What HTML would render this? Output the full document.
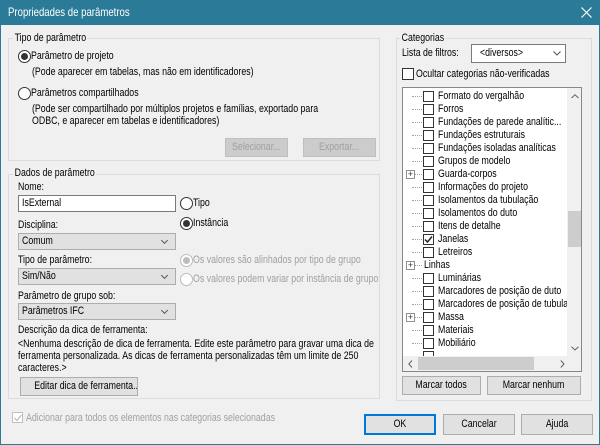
<!DOCTYPE html>
<html><head><meta charset="utf-8"><style>
*{box-sizing:border-box;margin:0;padding:0}
body{width:600px;height:445px;overflow:hidden;background:#f0f0f0;font-family:"Liberation Sans",sans-serif;font-size:11px;color:#000;position:relative}
.a{position:absolute;white-space:nowrap;line-height:13px;transform:scaleX(.8);transform-origin:0 0}
.s{display:inline-block;white-space:nowrap;transform:scaleX(.8);transform-origin:50% 50%}
.ls{display:inline-block;white-space:nowrap;transform:scaleX(.8);transform-origin:0 50%}
#win{position:absolute;left:0;top:0;width:600px;height:445px;border:1px solid #2b7a98}
#title{position:absolute;left:0;top:0;width:600px;height:25px;background:#2b7a98;color:#fff;font-size:12px;line-height:25px;padding-left:8px}
.grp{position:absolute;border:1px solid #dcdcdc}
.lbl{background:#f0f0f0;padding:0 2px}
.btn{position:absolute;background:#e1e1e1;border:1px solid #adadad;text-align:center;line-height:17px;white-space:nowrap;overflow:hidden}
.dis{color:#a0a0a0;background:#cccccc;border-color:#bfbfbf}
.sel{position:absolute;background:#e1e1e1;border:1px solid #adadad;height:17px;line-height:15px;padding-left:3px}
.sel:after{content:"";position:absolute;right:8px;top:4px;width:4px;height:4px;border-right:1px solid #555;border-bottom:1px solid #555;transform:rotate(45deg)}
.rad{position:absolute;width:13px;height:13px;border:1px solid #333;border-radius:50%;background:#fff}
.rad.on:after{content:"";position:absolute;left:2px;top:2px;width:7px;height:7px;border-radius:50%;background:#333}
.rad.g{border-color:#bcbcbc}.rad.g.on:after{background:#bcbcbc}
.g2{color:#a0a0a0}
.cb{position:absolute;width:11px;height:11px;border:1px solid #333;background:#fff}
.row{position:absolute;left:0;height:13px;width:170px}
.row .d{position:absolute;left:9px;top:6px;width:10px;border-top:1px dotted #a0a0a0}
.row .cb{left:20px;top:1px}
.row .t{position:absolute;left:35px;top:0;line-height:13px;white-space:nowrap;transform:scaleX(.8);transform-origin:0 0}
.plus{position:absolute;left:3px;top:2px;width:9px;height:9px;border:1px solid #919191;background:#fff;font-size:9px;line-height:7px;text-align:center;color:#333}
</style></head><body>
<div id="win"></div>
<div id="title"><span class="ls">Propriedades de parâmetros</span></div>
<svg style="position:absolute;left:581px;top:7px" width="11" height="11"><path d="M0.5 0.5L10.5 10.5M10.5 0.5L0.5 10.5" stroke="#fff" stroke-width="1.2"/></svg>

<!-- Tipo de parâmetro -->
<div class="grp" style="left:8px;top:38px;width:372px;height:123px"></div>
<div class="a lbl" style="left:13px;top:32px">Tipo de parâmetro</div>
<div class="rad on" style="left:18px;top:50px"></div>
<div class="a" style="left:31px;top:50px">Parâmetro de projeto</div>
<div class="a" style="left:32px;top:66px">(Pode aparecer em tabelas, mas não em identificadores)</div>
<div class="rad" style="left:18px;top:87px"></div>
<div class="a" style="left:31px;top:87px">Parâmetros compartilhados</div>
<div class="a" style="left:32px;top:103px">(Pode ser compartilhado por múltiplos projetos e famílias, exportado para</div>
<div class="a" style="left:32px;top:115px">ODBC, e aparecer em tabelas e identificadores)</div>
<div class="btn dis" style="left:225px;top:138px;width:63px;height:19px"><span class="s">Selecionar...</span></div>
<div class="btn dis" style="left:303px;top:138px;width:73px;height:19px"><span class="s">Exportar...</span></div>

<!-- Dados de parâmetro -->
<div class="grp" style="left:8px;top:174px;width:372px;height:225px"></div>
<div class="a lbl" style="left:13px;top:167px">Dados de parâmetro</div>
<div class="a" style="left:18px;top:181px">Nome:</div>
<div style="position:absolute;left:18px;top:195px;width:158px;height:17px;background:#fff;border:1px solid #7a7a7a;padding-left:3px;line-height:15px"><span class="ls">IsExternal</span></div>
<div class="rad" style="left:180px;top:197px"></div>
<div class="a" style="left:193px;top:197px">Tipo</div>
<div class="rad on" style="left:180px;top:217px"></div>
<div class="a" style="left:193px;top:217px">Instância</div>
<div class="a" style="left:18px;top:219px">Disciplina:</div>
<div class="sel" style="left:18px;top:233px;width:158px"><span class="ls">Comum</span></div>
<div class="a" style="left:18px;top:254px">Tipo de parâmetro:</div>
<div class="sel" style="left:18px;top:268px;width:158px"><span class="ls">Sim/Não</span></div>
<div class="rad on g" style="left:180px;top:254px"></div>
<div class="a g2" style="left:193px;top:254px">Os valores são alinhados por tipo de grupo</div>
<div class="rad g" style="left:180px;top:273px"></div>
<div class="a g2" style="left:193px;top:273px">Os valores podem variar por instância de grupo</div>
<div class="a" style="left:18px;top:290px">Parâmetro de grupo sob:</div>
<div class="sel" style="left:18px;top:303px;width:158px"><span class="ls">Parâmetros IFC</span></div>
<div class="a" style="left:18px;top:324px">Descrição da dica de ferramenta:</div>
<div class="a" style="left:18px;top:338px">&lt;Nenhuma descrição de dica de ferramenta. Edite este parâmetro para gravar uma dica de</div>
<div class="a" style="left:18px;top:350px">ferramenta personalizada. As dicas de ferramenta personalizadas têm um limite de 250</div>
<div class="a" style="left:18px;top:362px">caracteres.&gt;</div>
<div class="btn" style="left:20px;top:377px;width:118px;height:19px"><span class="s">Editar dica de ferramenta...</span></div>

<div class="cb" style="left:12px;top:412px;border-color:#c0c0c0"></div>
<svg style="position:absolute;left:13px;top:413px" width="10" height="10"><path d="M1.5 5L4 7.5L8.5 2" stroke="#c0c0c0" stroke-width="1.3" fill="none"/></svg>
<div class="a g2" style="left:26px;top:412px">Adicionar para todos os elementos nas categorias selecionadas</div>

<!-- Categorias -->
<div class="grp" style="left:396px;top:38px;width:196px;height:363px"></div>
<div class="a lbl" style="left:400px;top:32px">Categorias</div>
<div class="a" style="left:402px;top:47px">Lista de filtros:</div>
<div style="position:absolute;left:471px;top:44px;width:95px;height:19px;background:#fff;border:1px solid #7a7a7a;padding-left:8px;line-height:17px"><span class="ls">&lt;diversos&gt;</span></div>
<svg style="position:absolute;left:553px;top:51px" width="8" height="5"><path d="M0.5 0.5L4 4L7.5 0.5" stroke="#555" fill="none"/></svg>
<div class="cb" style="left:402px;top:68px;width:12px;height:12px"></div>
<div class="a" style="left:416px;top:68px">Ocultar categorias não-verificadas</div>

<div style="position:absolute;left:402px;top:87px;width:180px;height:285px;background:#fff;border:1px solid #828790;overflow:hidden">
 <div style="position:absolute;left:0;top:0;width:164px;height:268px;overflow:hidden">
  <div class="row" style="top:2px"><div class="d"></div><div class="cb"></div><div class="t">Formato do vergalhão</div></div>
  <div class="row" style="top:15px"><div class="d"></div><div class="cb"></div><div class="t">Forros</div></div>
  <div class="row" style="top:28px"><div class="d"></div><div class="cb"></div><div class="t">Fundações de parede analític...</div></div>
  <div class="row" style="top:41px"><div class="d"></div><div class="cb"></div><div class="t">Fundações estruturais</div></div>
  <div class="row" style="top:54px"><div class="d"></div><div class="cb"></div><div class="t">Fundações isoladas analíticas</div></div>
  <div class="row" style="top:67px"><div class="d"></div><div class="cb"></div><div class="t">Grupos de modelo</div></div>
  <div class="row" style="top:80px"><div class="d"></div><div class="plus">+</div><div class="cb"></div><div class="t">Guarda-corpos</div></div>
  <div class="row" style="top:93px"><div class="d"></div><div class="cb"></div><div class="t">Informações do projeto</div></div>
  <div class="row" style="top:106px"><div class="d"></div><div class="cb"></div><div class="t">Isolamentos da tubulação</div></div>
  <div class="row" style="top:119px"><div class="d"></div><div class="cb"></div><div class="t">Isolamentos do duto</div></div>
  <div class="row" style="top:132px"><div class="d"></div><div class="cb"></div><div class="t">Itens de detalhe</div></div>
  <div class="row" style="top:145px"><div class="d"></div><div class="cb"><svg style="position:absolute;left:0;top:0" width="9" height="9"><path d="M1 4.5L3.5 7L8 1.5" stroke="#222" stroke-width="1.5" fill="none"/></svg></div><div class="t">Janelas</div></div>
  <div class="row" style="top:158px"><div class="d"></div><div class="cb"></div><div class="t">Letreiros</div></div>
  <div class="row" style="top:171px"><div class="d"></div><div class="plus">+</div><div class="t" style="left:21px">Linhas</div></div>
  <div class="row" style="top:184px"><div class="d"></div><div class="cb"></div><div class="t">Luminárias</div></div>
  <div class="row" style="top:197px"><div class="d"></div><div class="cb"></div><div class="t">Marcadores de posição de duto</div></div>
  <div class="row" style="top:210px"><div class="d"></div><div class="cb"></div><div class="t">Marcadores de posição de tubula</div></div>
  <div class="row" style="top:223px"><div class="d"></div><div class="plus">+</div><div class="cb"></div><div class="t">Massa</div></div>
  <div class="row" style="top:236px"><div class="d"></div><div class="cb"></div><div class="t">Materiais</div></div>
  <div class="row" style="top:249px"><div class="d"></div><div class="cb"></div><div class="t">Mobiliário</div></div>
  <div class="row" style="top:262px"><div class="d"></div><div class="cb"></div></div>
 </div>
 <div style="position:absolute;left:164px;top:0;width:15px;height:268px;background:#f0f0f0"></div>
 <div style="position:absolute;left:165px;top:123px;width:13px;height:36px;background:#cdcdcd"></div>
 <svg style="position:absolute;left:168px;top:6px" width="8" height="5"><path d="M0.5 4L4 0.8L7.5 4" stroke="#606060" fill="none"/></svg>
 <svg style="position:absolute;left:168px;top:258px" width="8" height="5"><path d="M0.5 0.8L4 4L7.5 0.8" stroke="#606060" fill="none"/></svg>
 <div style="position:absolute;left:0;top:268px;width:180px;height:15px;background:#f0f0f0"></div>
 <div style="position:absolute;left:15px;top:269px;width:116px;height:13px;background:#cdcdcd"></div>
 <svg style="position:absolute;left:5px;top:272px" width="5" height="8"><path d="M4 0.5L0.8 4L4 7.5" stroke="#606060" fill="none"/></svg>
 <svg style="position:absolute;left:157px;top:272px" width="5" height="8"><path d="M0.8 0.5L4 4L0.8 7.5" stroke="#606060" fill="none"/></svg>
</div>
<div class="btn" style="left:402px;top:376px;width:79px;height:19px"><span class="s">Marcar todos</span></div>
<div class="btn" style="left:487px;top:376px;width:94px;height:19px"><span class="s">Marcar nenhum</span></div>

<div class="btn" style="left:364px;top:414px;width:72px;height:21px;border:2px solid #0078d7;line-height:17px"><span class="s">OK</span></div>
<div class="btn" style="left:443px;top:414px;width:72px;height:21px;line-height:19px"><span class="s">Cancelar</span></div>
<div class="btn" style="left:521px;top:414px;width:72px;height:21px;line-height:19px"><span class="s">Ajuda</span></div>
</body></html>
